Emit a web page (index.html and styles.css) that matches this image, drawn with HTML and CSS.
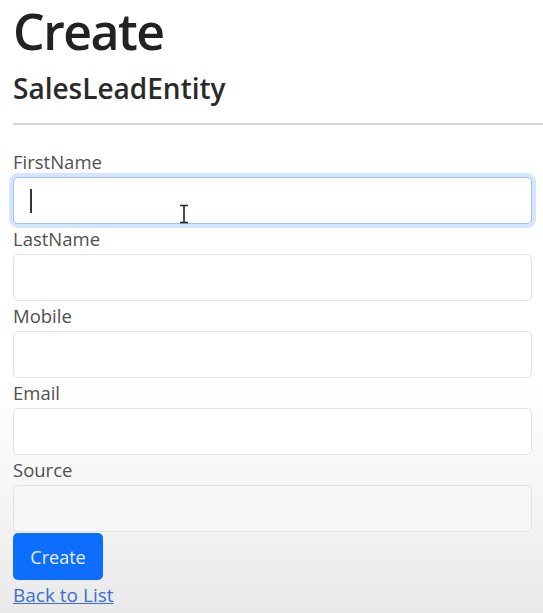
FILE: index.html
```html
<!DOCTYPE html>
<html lang="en">
<head>
<meta charset="utf-8">
<title>Create</title>
<link rel="stylesheet" href="styles.css">
</head>
<body>
<main class="page">
  <h1 class="title">Create</h1>
  <h4 class="subtitle">SalesLeadEntity</h4>
  <hr class="rule">
  <form class="form">
    <div class="group">
      <label class="label">FirstName</label>
      <div class="field field-focus">
        <span class="caret"></span>
        <svg class="ibeam" width="10" height="20" viewBox="0 0 10 20"><path d="M1 1.5h8M5 1.5v17M1 18.5h8" stroke="#222" stroke-width="1.6" fill="none"/></svg>
      </div>
    </div>
    <div class="group">
      <label class="label">LastName</label>
      <div class="field"></div>
    </div>
    <div class="group">
      <label class="label">Mobile</label>
      <div class="field"></div>
    </div>
    <div class="group">
      <label class="label">Email</label>
      <div class="field"></div>
    </div>
    <div class="group">
      <label class="label">Source</label>
      <div class="field field-gray"></div>
    </div>
    <button type="button" class="btn">Create</button>
  </form>
  <a class="back" href="#">Back to List</a>
</main>
</body>
</html>
```
FILE: styles.css
```css
html, body {
  margin: 0;
  padding: 0;
}
body {
  width: 543px;
  height: 613px;
  overflow: hidden;
  font-family: "Open Sans", "Noto Sans", sans-serif;
  color: #333;
  background: linear-gradient(to bottom, #ffffff 0px, #ffffff 380px, #f3f3f3 520px, #e9e9e9 613px);
}
.page {
  padding-left: 13px;
  padding-top: 2px;
}
.title {
  margin: 0;
  font-size: 50px;
  line-height: 58px;
  font-weight: 600;
  color: #222;
  letter-spacing: -1.5px;
}
.subtitle {
  margin: 10px 0 0 0;
  font-size: 28px;
  line-height: 36px;
  font-weight: 600;
  color: #2a2a2a;
}
.rule {
  margin: 17px 0 0 0;
  border: 0;
  border-top: 2px solid #d6d6d6;
  height: 0;
}
.form {
  margin-top: 22px;
  display: flex;
  flex-direction: column;
}
.group {
  display: flex;
  flex-direction: column;
}
.label {
  font-size: 18.5px;
  line-height: 30px;
  color: #505050;
}
.field {
  position: relative;
  width: 519px;
  height: 47px;
  box-sizing: border-box;
  border: 1.5px solid #e2e2e2;
  border-radius: 5px;
  background: #ffffff;
}
.field-focus {
  border-color: #9fc1f5;
  box-shadow: 0 0 0 4px rgba(13, 110, 253, 0.18);
}
.field-gray {
  background: #f6f6f6;
}
.caret {
  position: absolute;
  left: 16px;
  top: 11px;
  width: 2px;
  height: 24px;
  background: #333;
}
.ibeam {
  position: absolute;
  left: 165px;
  top: 26px;
}
.btn {
  align-self: flex-start;
  width: 90px;
  height: 47px;
  margin-top: 1px;
  border: 0;
  border-radius: 5px;
  background: #0d6efd;
  color: #e8f0ff;
  font-family: "Open Sans", "Noto Sans", sans-serif;
  font-size: 18px;
  line-height: 30px;
  padding: 0;
}
.back {
  display: inline-block;
  margin-top: 0;
  font-size: 19px;
  line-height: 30px;
  color: #3a6fcf;
  text-decoration: underline;
}
```
